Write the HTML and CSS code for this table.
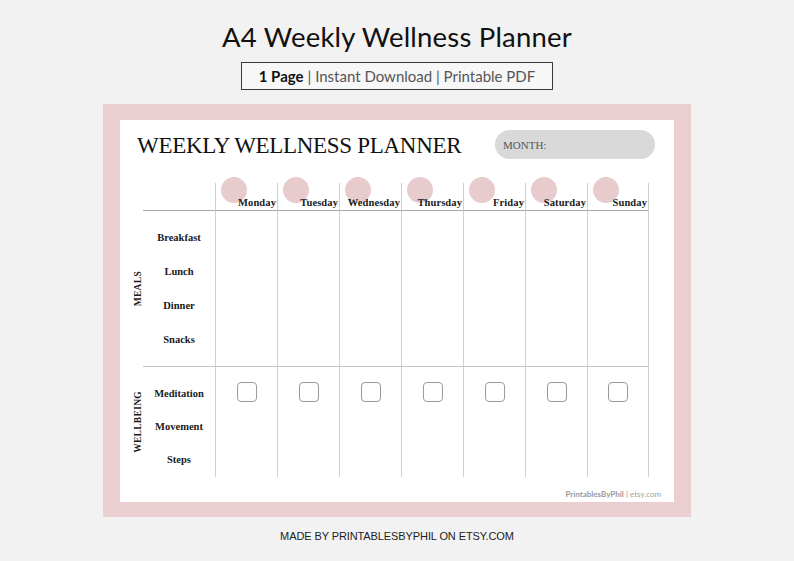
FILE: index.html
```html
<!DOCTYPE html>
<html>
<head>
<meta charset="utf-8">
<link rel="stylesheet" href="styles.css">
</head>
<body>
<div class="page">
  <h1 class="top-title">A4 Weekly Wellness Planner</h1>
  <div class="tagline"><b>1 Page</b> | Instant Download | Printable PDF</div>
  <div class="frame">
    <div class="sheet">
      <div class="sheet-head">
        <div class="sheet-title">WEEKLY WELLNESS PLANNER</div>
        <div class="month">MONTH:</div>
      </div>
      <div class="grid">
        <div class="side"></div>
        <div class="label-head"></div>
        <div class="day"><span class="dot"></span><span class="dname">Monday</span></div>
        <div class="day"><span class="dot"></span><span class="dname">Tuesday</span></div>
        <div class="day"><span class="dot"></span><span class="dname">Wednesday</span></div>
        <div class="day"><span class="dot"></span><span class="dname">Thursday</span></div>
        <div class="day"><span class="dot"></span><span class="dname">Friday</span></div>
        <div class="day"><span class="dot"></span><span class="dname">Saturday</span></div>
        <div class="day last"><span class="dot"></span><span class="dname">Sunday</span></div>

        <div class="side"><span class="vlabel">MEALS</span></div>
        <div class="labels meals">
          <span>Breakfast</span><span>Lunch</span><span>Dinner</span><span>Snacks</span>
        </div>
        <div class="cell meal"></div>
        <div class="cell meal"></div>
        <div class="cell meal"></div>
        <div class="cell meal"></div>
        <div class="cell meal"></div>
        <div class="cell meal"></div>
        <div class="cell meal last"></div>

        <div class="side"><span class="vlabel">WELLBEING</span></div>
        <div class="labels well">
          <span>Meditation</span><span>Movement</span><span>Steps</span>
        </div>
        <div class="cell wb"><span class="check"></span></div>
        <div class="cell wb"><span class="check"></span></div>
        <div class="cell wb"><span class="check"></span></div>
        <div class="cell wb"><span class="check"></span></div>
        <div class="cell wb"><span class="check"></span></div>
        <div class="cell wb"><span class="check"></span></div>
        <div class="cell wb last"><span class="check"></span></div>
      </div>
      <div class="credit"><b>PrintablesByPhil</b> | etsy.com</div>
    </div>
  </div>
  <div class="made">MADE BY PRINTABLESBYPHIL ON ETSY.COM</div>
</div>
</body>
</html>
```

FILE: styles.css
```css
* { box-sizing: border-box; }
html, body { margin: 0; padding: 0; }
body {
  background: #f2f2f2;
  width: 794px;
  height: 561px;
  overflow: hidden;
}
.page {
  display: flex;
  flex-direction: column;
  align-items: center;
}
.top-title {
  margin: 22px 0 0;
  font-family: "Lato", sans-serif;
  font-weight: 400;
  font-size: 27.5px;
  line-height: 30px;
  color: #111;
  letter-spacing: 0.2px;
}
.tagline {
  margin-top: 10px;
  width: 312px;
  height: 28px;
  border: 1.5px solid #3a3a3a;
  display: flex;
  align-items: center;
  justify-content: center;
  font-family: "Lato", sans-serif;
  font-size: 15px;
  color: #555;
  background: #f7f7f7;
}
.tagline b { color: #111; font-weight: 700; margin-right: 4px; }
.frame {
  margin-top: 14px;
  width: 588px;
  height: 413px;
  background: #ebcfd0;
  padding: 16px 17px 15px 17px;
}
.sheet {
  background: #fff;
  height: 100%;
  display: flex;
  flex-direction: column;
  padding: 10px 0 0 9px;
}
.sheet-head {
  display: flex;
  align-items: center;
  justify-content: space-between;
  height: 29px;
  padding-left: 8px;
  padding-right: 19px;
}
.sheet-title {
  font-family: "Liberation Serif", serif;
  font-size: 23px;
  letter-spacing: -0.3px;
  white-space: nowrap;
  color: #111;
  line-height: 29px;
  padding-top: 2px;
}
.month {
  width: 160px;
  height: 29px;
  border-radius: 15px;
  background: #d9d9d9;
  font-family: "Liberation Serif", serif;
  font-size: 11px;
  color: #555;
  display: flex;
  align-items: center;
  padding-left: 8px;
}
.grid {
  margin-top: 24px;
  display: grid;
  grid-template-columns: 14px 72px repeat(7, 62px);
  grid-template-rows: 28px 156px 110px;
  font-family: "Liberation Serif", serif;
  color: #1a1a1a;
}
.label-head { border-bottom: 1px solid #a9a9a9; }
.day {
  position: relative;
  border-left: 1px solid #cfcfcf;
  border-bottom: 1px solid #a9a9a9;
  display: flex;
  align-items: flex-end;
  justify-content: flex-end;
  padding: 0 1px 1px 0;
}
.day.last, .cell.last { border-right: 1px solid #cfcfcf; }
.dot {
  position: absolute;
  left: 5px;
  top: -6px;
  width: 26px;
  height: 26px;
  border-radius: 50%;
  background: #e8cccd;
}
.dname {
  position: relative;
  font-size: 10.5px;
  font-weight: 700;
  line-height: 12px;
  letter-spacing: 0.1px;
}
.side {
  display: flex;
  align-items: center;
  justify-content: center;
  padding-left: 4px;
}
.vlabel {
  writing-mode: vertical-rl;
  transform: rotate(180deg);
  font-size: 9.5px;
  font-weight: 700;
  letter-spacing: 0.3px;
}
.labels {
  display: flex;
  flex-direction: column;
  align-items: center;
  padding-top: 20px;
  font-size: 10.5px;
  font-weight: 700;
  line-height: 14px;
}
.labels.meals { gap: 20px; border-bottom: 1px solid #c4c4c4; }
.labels.well { gap: 19px; }
.cell { border-left: 1px solid #cfcfcf; }
.cell.meal { border-bottom: 1px solid #c4c4c4; }
.cell.wb {
  display: flex;
  justify-content: center;
  padding-top: 15px;
}
.check {
  width: 20px;
  height: 20px;
  border: 1.5px solid #9a9a9a;
  border-radius: 4px;
}
.credit {
  margin-top: 12px;
  align-self: flex-end;
  margin-right: 13px;
  font-family: "Lato", sans-serif;
  font-size: 8px;
  color: #a0a0a0;
}
.credit b { font-weight: 700; color: #999; }
.made {
  margin-top: 13px;
  font-family: "Liberation Sans", sans-serif;
  font-size: 11px;
  line-height: 13px;
  color: #222;
  letter-spacing: -0.1px;
}
```
